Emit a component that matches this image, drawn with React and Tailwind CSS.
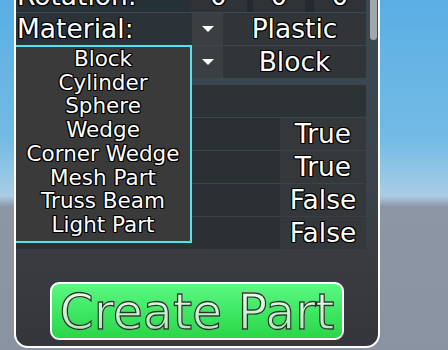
import React from 'react';

const outline = '[text-shadow:-1px_-1px_0_#000,1px_-1px_0_#000,-1px_1px_0_#000,1px_1px_0_#000,0_1px_0_#000,0_-1px_0_#000,1px_0_0_#000,-1px_0_0_#000]';

const shapes = ['Block', 'Cylinder', 'Sphere', 'Wedge', 'Corner Wedge', 'Mesh Part', 'Truss Beam', 'Light Part'];
const flags = ['True', 'True', 'False', 'False'];

const Arrow = () => (
    <div className="w-[31px] h-full bg-[#3c3f42] flex items-center justify-center">
        <svg width="12" height="6" viewBox="0 0 12 6"><path d="M0 0h12L6 6z" fill="#fff" /></svg>
    </div>
);

const App = () => {
    return (
        <div className="w-[448px] h-[350px] overflow-hidden bg-[linear-gradient(180deg,#5aaee3_0%,#74bbe6_40%,#a9cde4_56%,#8d96a5_59%,#8a93a2_100%)] font-['DejaVu_Sans',sans-serif] text-white">
            <div className="relative ml-[14px] -mt-[23px] w-[366px] h-[371px] border-2 border-white rounded-b-[14px] overflow-hidden bg-[linear-gradient(180deg,#3b4a55_0%,#3a434b_55%,#3a3c42_75%,#34363b_100%)] flex flex-col">
                {/* scrollbar */}
                <div className="absolute right-0 top-0 w-[10px] h-[61px] pl-[2px] pr-[1px]">
                    <div className="w-full h-full bg-[#a3a7ab] rounded-b-[4px]" />
                </div>

                <div className="w-[350px] flex flex-col gap-px">
                    {/* Rotation */}
                    <div className="h-[33px] flex bg-[#263037] text-[26.5px] leading-none">
                        <div className={`w-[174px] flex items-center pl-[1px] pt-[2px] ${outline}`}>Rotation:</div>
                        <div className="flex-1 flex bg-[#222a30]">
                            <div className={`w-[57px] bg-[#2f3337] flex items-center justify-center pt-[2px] ${outline}`}>0</div>
                            <div className="w-[6px]" />
                            <div className={`w-[52px] bg-[#2f3337] flex items-center justify-center pt-[2px] ${outline}`}>0</div>
                            <div className="w-[9px]" />
                            <div className={`w-[52px] bg-[#2f3337] flex items-center justify-center pt-[2px] ${outline}`}>0</div>
                        </div>
                    </div>
                    {/* Material */}
                    <div className="h-[32px] flex bg-[#2b3339] text-[26.5px] leading-none">
                        <div className={`w-[176px] flex items-center pl-[1px] ${outline}`}>Material:</div>
                        <Arrow />
                        <div className={`flex-1 bg-[#323538] flex items-center justify-center ${outline}`}>Plastic</div>
                    </div>
                    {/* Shape (label hidden under the open list) */}
                    <div className="h-[32px] flex bg-[#2b3339] text-[26.5px] leading-none">
                        <div className="w-[176px]" />
                        <Arrow />
                        <div className={`flex-1 bg-[#323538] flex items-center justify-center ${outline}`}>Block</div>
                    </div>
                    <div className="h-[5px]" />
                    <div className="h-[32px] bg-[#2d3235]" />
                    {flags.map((f, i) => (
                        <div key={i} className="h-[32px] flex text-[26.5px] leading-none">
                            <div className="w-[264px] bg-[#2b3033]" />
                            <div className={`flex-1 bg-[#35383b] flex items-center justify-center ${outline}`}>{f}</div>
                        </div>
                    ))}
                </div>

                <div className="mt-[33px] mx-auto w-[294px] h-[58px] rounded-[9px] border-2 border-white bg-[linear-gradient(180deg,#5bf882_0%,#3fe864_50%,#2bd548_100%)] flex items-center justify-center">
                    <span className="text-[49px] leading-none pt-[2px] bg-[linear-gradient(180deg,#f6fff7_0%,#cdf2d3_50%,#a8e3b2_100%)] bg-clip-text text-transparent [-webkit-text-stroke:1.3px_#1f3a24]">Create Part</span>
                </div>

                {/* shape dropdown */}
                <div className="absolute left-0 top-[66px] w-[176px] h-[198px] bg-[#3a3a3a] border-t-2 border-r-2 border-b-2 border-[#4fe3ef] flex flex-col items-center text-[21.5px] leading-none">
                    {shapes.map(s => (
                        <div key={s} className={`h-[23.7px] flex items-center ${outline}`}>{s}</div>
                    ))}
                </div>
            </div>
        </div>
    );
};

export default App;
